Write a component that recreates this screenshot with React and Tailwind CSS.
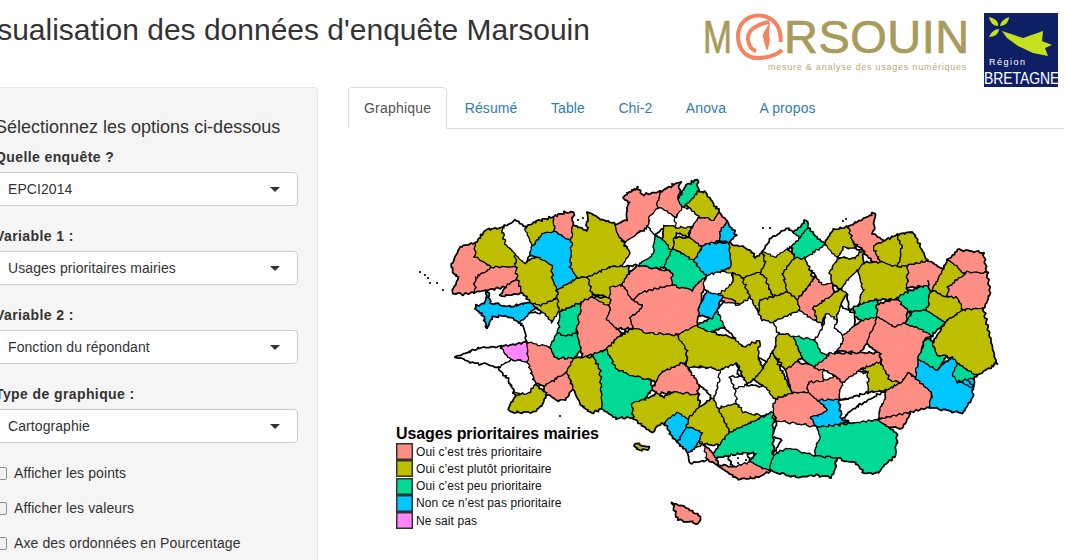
import React from 'react';

const S = '#ff8e85';
const O = '#bebe00';
const T = '#00da95';
const B = '#00c6ff';
const W = '#ffffff';
const P = '#ff85ff';

// Communities, in page pixels
const areas = [
  [S, '453,260 460,247 473,243 475,257 493,267 475,278 475,292 463,294 453,293 458,277 452,270'],
  [O, '475,243 487,230 503,233 505,243 517,253 516,267 493,267 475,257'],
  [S, '475,278 493,267 516,267 517,278 500,283 475,292'],
  [S, '500,296 507,283 517,280 519,292'],
  [W, '502,228 517,220 525,228 532,247 525,263 517,258 516,253 505,243'],
  [O, '525,228 535,222 553,217 555,232 543,233 538,246 532,246'],
  [S, '553,217 567,212 573,213 576,241 555,233'],
  [O, '573,225 587,232 588,213 617,222 617,233 632,250 623,267 610,267 588,277 577,278 570,268'],
  [B, '543,233 555,232 576,241 570,268 578,278 570,288 557,290 552,278 552,265 535,258 532,247 538,246'],
  [O, '517,258 525,263 535,258 552,265 552,278 557,290 558,300 538,303 522,293 517,278'],
  [O, '528,305 538,303 557,298 558,313 552,322 543,313'],
  [O, '558,290 577,280 585,278 595,292 610,298 610,307 593,297 580,298 558,312'],
  [O, '588,277 610,267 630,268 622,287 612,298 595,292'],
  [B, '475,307 485,303 488,293 490,303 510,307 528,305 528,313 520,322 503,315 493,317 487,329 484,317'],
  [W, '520,322 530,313 543,313 552,322 560,318 558,333 550,345 527,343 525,330'],
  [W, '456,357 480,348 500,346 510,360 498,368 487,363 478,364'],
  [P, '500,347 513,345 522,343 530,350 528,362 513,362'],
  [W, '498,368 510,360 513,362 528,362 535,383 530,388 512,393 513,388 507,377'],
  [O, '508,408 513,397 530,393 532,383 547,397 542,405 535,412 512,412'],
  [O, '512,392 520,388 521,394 515,396'],
  [S, '528,347 547,343 552,353 572,362 568,372 543,385 535,383 528,362'],
  [S, '543,385 560,380 563,370 567,381 574,385 567,390 565,400 558,400 547,395'],
  [T, '558,333 567,336 577,335 583,350 573,357 555,358 550,347'],
  [T, '560,312 582,302 585,313 582,330 567,336 558,333'],
  [S, '585,302 590,297 607,305 607,320 620,325 605,340 583,357 577,335 582,330'],
  [S, '610,287 623,285 630,300 643,307 630,318 633,328 620,325 607,320 610,307'],
  [S, '623,277 638,265 672,268 672,285 643,292 632,300 623,285'],
  [S, '632,300 643,292 672,285 693,287 703,277 700,313 692,323 673,335 648,333 633,328 630,318 643,307'],
  [O, '605,343 613,333 630,328 647,333 677,333 680,335 687,350 683,362 660,370 650,378 637,377 617,368 610,353'],
  [O, '680,337 697,325 707,332 737,338 743,347 757,342 758,353 763,373 743,383 737,362 717,368 703,363 688,365 687,350'],
  [T, '593,360 600,349 607,350 617,370 637,377 650,378 652,390 643,400 632,403 632,418 617,418 602,407 600,368'],
  [O, '567,372 573,358 593,357 593,367 600,370 602,408 592,413 580,403 573,388'],
  [S, '652,388 660,373 683,362 690,378 698,383 698,395 673,392 663,398 658,392'],
  [O, '632,403 643,400 660,392 663,398 673,392 698,395 700,403 687,417 663,425 655,427 653,433 633,417'],
  [O, '688,418 700,407 710,398 718,408 728,428 717,443 705,440 693,447 693,440 702,432 687,427'],
  [O, '717,413 737,403 743,412 763,413 743,427 730,432 728,422'],
  [B, '665,422 677,412 688,418 687,427 678,440 672,437'],
  [B, '678,442 687,427 702,432 700,437 692,445 688,453'],
  [W, '688,367 710,363 722,373 718,388 713,398 698,383'],
  [W, '720,370 737,363 738,375 730,380 732,390 738,402 733,407 718,408 713,398 718,388'],
  [W, '730,377 747,375 747,385 738,392 732,390'],
  [W, '737,392 747,385 763,383 767,393 775,397 770,412 763,413 743,412 737,403'],
  [T, '717,450 728,435 753,423 773,412 778,433 777,460 770,470 753,460 757,453 740,448 720,457'],
  [S, '722,465 733,467 750,462 765,473 758,477 737,479'],
  [W, '728,457 747,450 750,467 733,467'],
  [S, '705,442 715,452 718,465 710,462'],
  [W, '688,453 703,447 707,460 690,463'],
  [S, '623,197 637,188 643,195 662,190 657,208 649,218 648,227 637,228 628,242 617,233 615,225 627,220 627,208 630,203'],
  [S, '660,192 680,182 678,200 683,208 673,218 665,210 657,208'],
  [T, '678,200 687,185 697,180 696,192 688,208 683,208'],
  [O, '689,208 698,192 705,192 719,207 713,220 700,215'],
  [W, '649,218 660,210 665,210 675,218 675,232 665,225 655,235 648,227'],
  [W, '675,218 683,208 689,208 700,218 690,220 689,228 678,228'],
  [S, '690,227 700,217 713,220 719,212 726,220 720,232 720,240 705,242 700,246 690,238'],
  [B, '720,232 727,222 736,235 730,241 720,240'],
  [W, '625,243 630,233 648,227 655,235 650,252 638,265 623,266 630,253'],
  [O, '662,238 665,225 675,232 678,228 689,228 689,238 678,238 678,243 670,247'],
  [O, '678,238 689,238 701,247 700,257 690,259 679,250'],
  [T, '638,268 653,255 655,235 662,238 670,247 678,250 672,252 663,267 652,272'],
  [T, '663,267 672,258 672,252 678,250 690,259 693,263 705,275 695,278 692,290 683,283 673,282 672,272'],
  [B, '693,262 703,243 710,240 729,243 728,263 720,268 718,275 707,273'],
  [W, '703,283 707,273 718,275 733,268 734,288 725,292 717,298 710,290'],
  [B, '695,303 707,290 720,300 719,313 712,318 698,315'],
  [T, '700,322 712,318 717,307 720,318 728,321 722,332 710,332'],
  [S, '723,302 726,295 740,308 735,312 728,308'],
  [O, '720,272 732,267 728,240 750,250 755,258 765,253 765,262 760,272 742,278 733,272'],
  [O, '733,273 742,278 750,297 738,305 732,298 718,295 733,283'],
  [O, '742,278 760,272 765,277 770,298 760,300 760,313 750,297'],
  [O, '762,253 787,245 795,247 795,258 783,273 787,292 775,302 770,298 765,277 760,272 765,262'],
  [O, '783,273 795,258 803,260 813,277 797,300 787,292'],
  [O, '760,300 770,298 775,302 787,292 797,302 798,308 773,318 763,321 760,313'],
  [W, '763,252 772,238 788,228 802,233 792,245 787,245 775,258'],
  [T, '792,247 797,238 812,232 823,242 805,258 795,258'],
  [T, '797,228 807,220 811,225 800,237'],
  [W, '803,255 820,245 838,258 830,272 832,283 822,285 805,267'],
  [O, '825,245 832,230 848,230 853,242 843,247 838,253'],
  [W, '838,253 843,247 852,248 857,252 855,258 840,257'],
  [O, '830,272 838,258 855,259 863,250 865,263 853,270 842,287 832,283'],
  [S, '848,227 875,213 873,233 883,238 873,245 880,262 873,263 865,250 857,242'],
  [O, '873,246 897,235 902,247 898,267 880,262'],
  [O, '897,235 913,232 927,261 907,265 898,267 902,247'],
  [O, '863,263 880,262 898,267 907,267 903,290 897,300 890,297 877,305 858,302 863,290 860,273'],
  [W, '840,290 852,272 860,273 863,290 858,305 852,307 847,293'],
  [S, '903,287 908,265 927,261 940,267 938,280 933,290 927,280 920,290'],
  [O, '935,287 948,262 958,267 967,278 948,287 948,297 933,292'],
  [S, '948,260 958,250 983,253 987,272 967,268 958,267'],
  [S, '948,287 967,278 967,268 987,273 990,293 983,308 963,310 957,297 948,295'],
  [O, '928,293 933,292 948,297 957,297 957,308 945,322 927,312'],
  [O, '936,345 945,322 963,310 983,308 995,360 997,363 977,372 962,365 948,353 935,355'],
  [T, '897,300 908,292 923,287 928,280 930,293 927,310 912,310 908,322 907,307'],
  [T, '910,327 913,312 927,310 947,323 935,335 917,328'],
  [T, '852,305 865,303 877,298 878,320 870,325 860,317'],
  [S, '877,305 890,302 893,297 897,303 907,312 905,323 893,327 880,313'],
  [S, '867,343 877,317 893,327 905,323 917,328 930,335 925,345 917,350 917,373 907,373 902,380 892,380 887,363 880,353 868,347'],
  [S, '840,343 847,337 863,318 877,317 867,343 860,351 840,348'],
  [W, '815,340 825,333 830,313 838,312 835,327 842,337 843,343 838,350 817,350'],
  [W, '835,327 840,305 857,313 855,327 847,335 842,335'],
  [O, '813,308 840,295 832,283 847,293 840,305 835,320 827,313 822,322 817,318'],
  [S, '797,300 813,278 822,285 832,283 835,295 813,308 817,320 808,315 800,310'],
  [W, '773,322 788,308 800,310 808,317 822,323 820,333 815,340 793,333 778,333'],
  [W, '717,310 723,302 740,305 747,300 762,320 773,322 778,333 775,345 765,360 758,357 760,340 743,347 725,327'],
  [O, '755,380 763,370 768,353 775,353 792,393 775,399 765,387'],
  [O, '775,353 778,336 793,336 802,357 785,368'],
  [T, '793,350 798,338 817,340 820,355 828,352 813,368 803,368 802,357'],
  [S, '772,400 792,393 808,392 818,400 827,410 818,415 810,415 812,425 797,423 778,418 773,408'],
  [S, '787,370 798,363 808,368 823,370 823,377 808,382 805,395 792,393'],
  [W, '823,370 835,373 833,380 823,381'],
  [S, '808,382 823,381 835,377 842,383 838,398 818,400 808,392'],
  [S, '813,368 830,350 860,353 863,348 880,353 880,362 860,365 858,373 842,378 835,373 823,370'],
  [W, '838,398 842,383 858,373 868,373 870,390 853,397 847,402'],
  [B, '810,417 820,415 827,410 818,402 845,401 848,397 847,407 837,418 847,423 835,428 820,424'],
  [W, '840,420 855,408 887,392 885,403 877,418 855,425'],
  [O, '858,365 880,362 890,380 900,383 887,390 868,392 868,373'],
  [S, '877,418 887,390 900,383 908,373 930,392 927,402 932,408 907,412 880,418'],
  [S, '878,420 910,412 913,417 903,428 882,432'],
  [B, '917,378 923,360 937,370 952,357 960,360 962,367 975,378 972,398 963,413 928,402 932,392 910,373'],
  [T, '917,353 923,340 935,342 937,355 945,358 942,370 937,370 923,360'],
  [T, '952,373 962,367 970,365 977,373 975,378 960,378'],
  [B, '957,382 967,381 972,387 957,388'],
  [W, '772,450 782,440 773,437 777,420 817,428 820,437 815,453 790,447'],
  [T, '813,457 820,437 817,427 855,423 877,420 897,435 895,455 877,473 865,473 855,463 842,460 840,468 837,468 837,458 827,457'],
  [T, '770,472 773,455 788,448 812,455 813,458 837,458 832,477 817,475 797,477 777,472'],
  [S, '672,502 683,507 700,517 698,523 678,520'],
  [O, '634,444 648,447 647,450 638,449'],
];

// Small islets and coast specks
const specks = [
  [420, 272], [425, 275], [428, 278], [430, 283], [437, 283], [443, 290],
  [627, 193], [632, 190], [672, 184], [763, 228], [770, 228], [843, 221],
  [846, 219], [578, 220], [583, 218], [560, 416], [733, 455], [738, 458],
  [742, 454], [746, 460], [738, 463],
];

function snapToCorners(polys, reach) {
  polys.forEach((poly, i) => {
    poly.forEach((v) => {
      let best = null;
      let bestD = reach;
      polys.forEach((other, j) => {
        if (j === i) return;
        other.forEach((o) => {
          const d = Math.hypot(o[0] - v[0], o[1] - v[1]);
          if (d < bestD) {
            bestD = d;
            best = o;
          }
        });
      });
      if (best) {
        v[0] = best[0];
        v[1] = best[1];
      }
    });
  });
}

function snapToEdges(polys, reach) {
  polys.forEach((poly, i) => {
    poly.forEach((v) => {
      let best = null;
      let bestD = reach;
      polys.forEach((other, j) => {
        if (j === i) return;
        other.forEach((a, k) => {
          const b = other[(k + 1) % other.length];
          const dx = b[0] - a[0];
          const dy = b[1] - a[1];
          const t = Math.max(0, Math.min(1, ((v[0] - a[0]) * dx + (v[1] - a[1]) * dy) / (dx * dx + dy * dy || 1)));
          const px = a[0] + dx * t;
          const py = a[1] + dy * t;
          const d = Math.hypot(px - v[0], py - v[1]);
          if (d > 0.01 && d < bestD) {
            bestD = d;
            best = [px, py];
          }
        });
      });
      if (best) {
        v[0] = best[0];
        v[1] = best[1];
      }
    });
  });
}

// Pulls neighbouring outlines together so the communities touch
function snapOutlines(list) {
  const polys = list.map(([, p]) => p.split(' ').map((q) => q.split(',').map(Number)));
  snapToCorners(polys, 6.5);
  snapToEdges(polys, 7);
  snapToEdges(polys, 5);
  return polys;
}

// Same wobble for the same place, so shared borders stay on one line
function wobble(poly) {
  const out = [];
  poly.forEach((a, i) => {
    const b = poly[(i + 1) % poly.length];
    const steps = Math.max(1, Math.round(Math.hypot(b[0] - a[0], b[1] - a[1]) / 2));
    for (let s = 0; s < steps; s++) {
      const x = a[0] + ((b[0] - a[0]) * s) / steps;
      const y = a[1] + ((b[1] - a[1]) * s) / steps;
      const wx = Math.sin(x * 1.1 + y * 0.7) * 0.8 + Math.sin(y * 2.3 - x * 0.4) * 0.5;
      const wy = Math.sin(y * 1.2 - x * 0.8) * 0.8 + Math.sin(x * 2.1 + y * 0.5) * 0.5;
      out.push(`${(x + wx).toFixed(1)},${(y + wy).toFixed(1)}`);
    }
  });
  return out.join(' ');
}

const outlines = snapOutlines(areas).map(wobble);

function Select({ label, value }) {
  return (
    <div className="mb-[20px]">
      <label className="mb-[5px] block h-[20px] font-bold leading-[20px] tracking-[0.4px] text-[#333]">{label}</label>
      <div className="flex h-[34px] w-[303px] items-center justify-between rounded-[4px] border border-[#ccc] bg-white pl-[12px] pr-[17px] tracking-[0.08px] text-[#333]">
        <span>{value}</span>
        <span className="h-0 w-0 border-x-[5px] border-t-[5px] border-x-transparent border-t-[#333]" />
      </div>
    </div>
  );
}

function Check({ label }) {
  return (
    <div className="flex h-[20px] items-center gap-[6px] tracking-[0.1px] text-[#333]">
      <span className="ml-[-1px] h-[13px] w-[13px] rounded-[2px] border border-[#8f8f8f] bg-[#f1f1f1]" />
      <span className="ml-[1px]">{label}</span>
    </div>
  );
}

function MarsouinLogo() {
  return (
    <div className="mt-[13px] flex w-[264px] flex-col items-end">
      <div className="flex h-[47px] w-full items-center text-[47px] leading-none text-[#a99b5b] [-webkit-text-stroke:0.7px_#a99b5b]">
        <span className="inline-block w-[29px] origin-left scale-x-[0.74]">M</span>
        <svg width="47" height="50" viewBox="0 0 47 50" className="ml-[4px] shrink-0 self-start">
          <path d="M44.5 29 C46 12 35 2.5 23 2.5 C10 2.5 2 12 2 23 C2 36 10 45 21 45 C31 45 40 43 46 37" fill="none" stroke="#f6835f" strokeWidth="4" />
          <path d="M33 9 C21 11 11 17 12 27 C13 33 16 37 20 38" fill="none" stroke="#f6835f" strokeWidth="4" />
          <path d="M34 8 C32 15 26 19 27 24 C28 30 30 35 31 38 C33 33 35 27 33 22 C33 17 34 13 34 8 Z" fill="#f6835f" />
        </svg>
        <span className="ml-[1px] tracking-[0.5px]">RSOUIN</span>
      </div>
      <div className="mt-[1px] whitespace-nowrap text-[9px] leading-[12px] tracking-[0.76px] text-[#b8ab70]">
        mesure &amp; analyse des usages numériques
      </div>
    </div>
  );
}

function BretagneLogo() {
  return (
    <div className="relative mt-[13px] ml-[17px] flex h-[74px] w-[74px] shrink-0 flex-col items-start justify-end overflow-hidden bg-[#0e1f66] pb-[4px] text-white">
      <svg width="74" height="74" viewBox="0 0 74 74" className="absolute left-0 top-0">
        <path d="M18 18 L39 25 L59 18 L58 28 L68 32 L61 35 L64 43 L49 40 L34 33 L23 25 Z" fill="#c5e01e" />
        <path d="M5 4 C10 5 15 8 14 13 C9 13 6 9 5 4 Z" fill="#c5e01e" />
        <path d="M16 13 C17 8 20 6 25 4 C25 9 21 13 16 13 Z" fill="#c5e01e" />
        <path d="M5 24 C7 19 11 16 15 16 C15 21 10 24 5 24 Z" fill="#c5e01e" />
      </svg>
      <span className="relative mb-[4px] ml-[5px] text-[9px] leading-[10px] tracking-[1.5px]">Région</span>
      <span className="relative inline-block origin-top scale-y-[1.15] whitespace-nowrap text-[14px] leading-[12px] tracking-[-0.1px]">BRETAGNE</span>
    </div>
  );
}

const legend = [
  [S, 'Oui c’est très prioritaire'],
  [O, 'Oui c’est plutôt prioritaire'],
  [T, 'Oui c’est peu prioritaire'],
  [B, 'Non ce n’est pas prioritaire'],
  [P, 'Ne sait pas'],
];

function MapPlot() {
  return (
    <div className="relative h-[431px] w-[716px]">
      <svg width="716" height="431" viewBox="348 129 716 431" className="block">
        {outlines.map((pts, i) => (
          <polygon key={i} points={pts} fill="#000" stroke="#000" strokeWidth="2.2" strokeLinejoin="round" />
        ))}
        {areas.map(([fill], i) => (
          <polygon key={i} points={outlines[i]} fill={fill} stroke="#000" strokeWidth="1.2" strokeLinejoin="round" />
        ))}
        {specks.map(([x, y], i) => (
          <circle key={i} cx={x} cy={y} r="1.1" fill="#000" />
        ))}
      </svg>
      <div className="absolute left-[48px] top-[296px] text-[#111]">
        <div className="text-[16px] font-bold leading-[18px] tracking-[-0.1px] text-black">Usages prioritaires mairies</div>
        <div className="flex flex-col">
          {legend.map(([color, text]) => (
            <div key={text} className="flex h-[17.25px] items-center gap-[3px] text-[12px] tracking-[0.1px]">
              <svg width="17" height="17" className="shrink-0">
                <rect x="0.75" y="0.75" width="15.5" height="15.5" fill={color} stroke="#333" strokeWidth="1.5" />
              </svg>
              <span>{text}</span>
            </div>
          ))}
        </div>
      </div>
    </div>
  );
}

export default function App() {
  const tabs = ['Résumé', 'Table', 'Chi-2', 'Anova', 'A propos'];

  return (
    <div className="h-[560px] w-[1067px] overflow-hidden bg-white font-['Liberation_Sans',Arial,sans-serif] text-[14px] leading-[20px]">
      {/* Header */}
      <header className="flex h-[87px] items-start justify-between pr-[9px]">
        <h1 className="ml-[-29px] mt-[11px] whitespace-nowrap text-[30px] font-normal leading-[38px] text-[#333]">
          Visualisation des données d'enquête Marsouin
        </h1>
        <div className="flex items-start">
          <MarsouinLogo />
          <BretagneLogo />
        </div>
      </header>

      <div className="flex">
        {/* Sidebar */}
        <aside className="ml-[-25px] h-[500px] w-[343px] shrink-0 rounded-[4px] border border-[#e3e3e3] bg-[#f5f5f5] pl-[19px] pt-[29px]">
          <h3 className="mb-[10px] h-[20px] text-[18px] font-normal leading-[20px] text-[#333]">Sélectionnez les options ci-dessous</h3>
          <Select label="Quelle enquête ?" value="EPCI2014" />
          <Select label="Variable 1 :" value="Usages prioritaires mairies" />
          <Select label="Variable 2 :" value="Fonction du répondant" />
          <Select label="Type de graphique :" value="Cartographie" />
          <div className="flex flex-col gap-[15px]">
            <Check label="Afficher les points" />
            <Check label="Afficher les valeurs" />
            <Check label="Axe des ordonnées en Pourcentage" />
          </div>
        </aside>

        {/* Main panel */}
        <main className="ml-[30px] w-[716px] shrink-0">
          <nav className="flex h-[42px] border-b border-[#ddd] tracking-[0.1px]">
            <span className="mb-[-1px] mr-[-1px] rounded-t-[4px] border border-[#ddd] border-b-white bg-white px-[15px] pt-[10px] tracking-[0.2px] text-[#555]">Graphique</span>
            {tabs.map((tab) => (
              <span key={tab} className="ml-[3.5px] px-[15px] pt-[11px] text-[#337ab7]">{tab}</span>
            ))}
          </nav>
          <MapPlot />
        </main>
      </div>
    </div>
  );
}
